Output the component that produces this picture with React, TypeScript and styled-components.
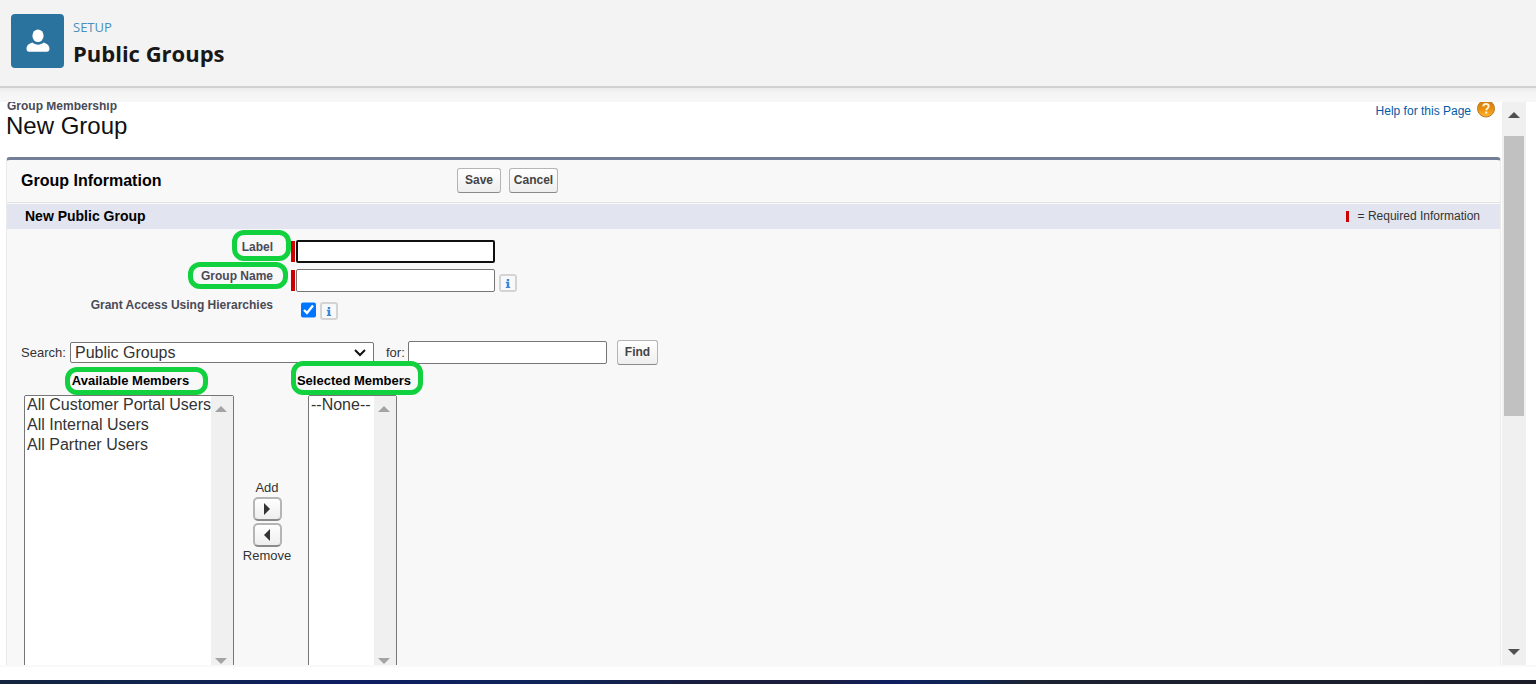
import React from "react";
import styled, { createGlobalStyle, css } from "styled-components";

const GlobalStyle = createGlobalStyle`
  *, *::before, *::after { box-sizing: border-box; }
  body {
    margin: 0;
    background: #fff;
    color: #333;
    font-family: "Liberation Sans", Arial, sans-serif;
    font-size: 13px;
    line-height: 16px;
  }
  h1, h2, h3, p { margin: 0; }
  button, input, select { font-family: inherit; margin: 0; }
`;

const Page = styled.div`
  display: flex;
  flex-direction: column;
  height: 100vh;
  overflow: hidden;
  background: #fff;
`;

const SetupHeader = styled.header`
  display: flex;
  flex: none;
  align-items: flex-start;
  gap: 9px;
  height: 88px;
  padding: 14px 11px 0;
  background: #f3f3f3;
  border-bottom: 2px solid #d0d0d0;
`;

const HeaderIcon = styled.span`
  display: flex;
  align-items: center;
  justify-content: center;
  width: 53px;
  height: 54px;
  border-radius: 4px;
  background: #2a739e;
`;

const HeaderText = styled.div`
  font-family: "Open Sans", "Noto Sans", sans-serif;
  padding-top: 4px;
`;

const Eyebrow = styled.p`
  font-size: 13px;
  line-height: 18px;
  color: #4a8fc0;
`;

const HeaderTitle = styled.h1`
  font-size: 22px;
  line-height: 34px;
  font-weight: 700;
  color: #181818;
`;

const HeaderShade = styled.div`
  flex: none;
  height: 14px;
  background: linear-gradient(#ececec, #f5f5f5 5px, #f7f7f7);
`;

const Frame = styled.div`
  display: flex;
  flex: 1;
  min-height: 0;
  padding-right: 10px;
`;

const Content = styled.main`
  flex: 1;
  min-width: 0;
  overflow: hidden;
  padding: 0 1px 0 6px;
`;

const TitleRow = styled.div`
  display: flex;
  justify-content: space-between;
  align-items: flex-start;
  height: 55px;
`;

const TitleText = styled.div`
  margin-top: -4px;
`;

const Crumb = styled.p`
  padding-left: 1px;
  font-size: 12px;
  font-weight: 700;
  color: #4a4a56;
`;

const Title = styled.h2`
  font-size: 24px;
  line-height: 24px;
  font-weight: 400;
  color: #111;
`;

const HelpLink = styled.a`
  display: flex;
  align-items: flex-start;
  gap: 6px;
  margin-top: -2px;
  padding-right: 6px;
  font-size: 12px;
  line-height: 22px;
  color: #015ba7;
  text-decoration: none;
`;

const Panel = styled.form`
  height: 540px;
  background: #f8f8f8;
  border: 1px solid #eaeaea;
  border-top: 3px solid #747e96;
  border-radius: 4px;
`;

const PanelHead = styled.div`
  display: grid;
  grid-template-columns: 436px 1fr;
  align-items: center;
  height: 43px;
  padding-left: 14px;
  padding-bottom: 1px;
  border-bottom: 1px solid #e2e2e2;
`;

const PanelTitle = styled.h2`
  font-size: 16px;
  line-height: 20px;
  color: #000;
`;

const ButtonBar = styled.div`
  display: flex;
  gap: 8px;
`;

const buttonFace = css`
  border: 1px solid;
  border-color: #b5b5b5 #b5b5b5 #8a8a8a;
  border-radius: 3px;
  background: linear-gradient(#fff, #eee);
  color: #444;
`;

const Button = styled.button<{ $width: number }>`
  ${buttonFace}
  width: ${(p) => p.$width}px;
  height: 25px;
  padding: 0 0 1px;
  font-size: 12px;
  line-height: 16px;
  font-weight: 700;
`;

const SectionBar = styled.div`
  display: flex;
  align-items: center;
  justify-content: space-between;
  height: 25px;
  margin-top: 1px;
  padding: 0 20px 1px 18px;
  background: #e2e5ef;
`;

const SectionTitle = styled.h3`
  font-size: 14px;
  line-height: 20px;
  color: #000;
`;

const RequiredNote = styled.span`
  display: flex;
  align-items: center;
  gap: 9px;
  font-size: 12px;
  &::before {
    content: "";
    width: 3px;
    height: 11px;
    background: #c00;
  }
`;

const Fields = styled.div`
  display: flex;
  flex-direction: column;
  gap: 6px;
  padding-top: 11px;
`;

const Field = styled.div`
  display: grid;
  grid-template-columns: 266px 1fr;
  column-gap: 18px;
  align-items: start;
  min-height: 23px;
`;

const FieldLabel = styled.label`
  justify-self: end;
  font-size: 12px;
  line-height: 14px;
  font-weight: 700;
  color: #4a4a56;
`;

const FieldControl = styled.div`
  display: flex;
  align-items: flex-end;
  gap: 4px;
`;

const RequiredMark = styled.span`
  align-self: center;
  width: 4px;
  height: 21px;
  background: #c00;
`;

const RequiredPair = styled.span`
  display: flex;
  gap: 1px;
`;

const TextInput = styled.input<{ $active?: boolean }>`
  width: 199px;
  height: 23px;
  padding: 0 4px;
  border: ${(p) => (p.$active ? "2px solid #101010" : "1px solid #767676")};
  border-radius: 2px;
  background: #fff;
  font-size: 16px;
  outline: none;
`;

const CheckControl = styled(FieldControl)`
  padding: 4px 0 0 10px;
`;

const Checkbox = styled.input`
  align-self: flex-start;
  width: 15px;
  height: 16px;
  accent-color: #0075ff;
`;

const InfoButton = styled.button`
  display: flex;
  align-items: center;
  justify-content: center;
  width: 18px;
  height: 18px;
  padding: 0;
  border: 2px solid #d4d4d4;
  border-radius: 3px;
  background: #f6f8fa;
`;

const SearchRow = styled.div`
  display: flex;
  align-items: center;
  height: 25px;
  padding-left: 14px;
  margin-top: 19px;
`;

const SearchLabel = styled.label`
  width: 49px;
`;

const ForLabel = styled.label`
  width: 22px;
  margin-left: 12px;
`;

const SelectWrap = styled.span`
  display: grid;
  align-items: center;
  svg {
    grid-area: 1 / 1;
    justify-self: end;
    margin-right: 8px;
    pointer-events: none;
  }
`;

const Select = styled.select`
  grid-area: 1 / 1;
  appearance: none;
  width: 304px;
  height: 21px;
  padding: 0 4px;
  border: 1px solid #767676;
  border-radius: 2px;
  background: #fff;
  color: #333;
  font-size: 16px;
  line-height: 18px;
`;

const FindSlot = styled.span`
  margin-left: 10px;
`;

const Members = styled.div`
  display: grid;
  grid-template-columns: 210px 74px 89px;
  padding: 7px 0 0 17px;
`;

const MemberHeading = styled.div`
  display: flex;
  justify-content: center;
  height: 23px;
  padding-left: 3px;
  white-space: nowrap;
  label {
    font-weight: 700;
    line-height: 18px;
    color: #000;
  }
`;

const Ring = styled.span<{ $inset: string }>`
  position: relative;
  &::after {
    content: "";
    position: absolute;
    inset: ${(p) => p.$inset};
    border: 5px solid #11d13f;
    border-radius: 12px;
    pointer-events: none;
  }
`;

const ListBox = styled.div`
  display: flex;
  height: 280px;
  border: 1px solid #767676;
  border-radius: 2px;
  background: #fff;
`;

const List = styled.select`
  flex: 1;
  min-width: 0;
  height: 100%;
  padding: 0;
  border: 0;
  background: #fff;
  color: #333;
  font-size: 16px;
  overflow: hidden;
  scrollbar-width: none;
  outline: none;
  option {
    min-height: 20px;
    padding: 0 0 0 2px;
    line-height: 18px;
  }
`;

const ListTrack = styled.div`
  display: flex;
  flex-direction: column;
  align-items: center;
  justify-content: space-between;
  width: 22px;
  padding: 10px 2px 10px 0;
  background: #f0f0f0;
`;

const Mover = styled.div`
  display: flex;
  flex-direction: column;
  align-items: center;
  padding: 85px 8px 0 0;
`;

const MoveButton = styled.button`
  ${buttonFace}
  display: flex;
  align-items: center;
  justify-content: center;
  width: 29px;
  height: 24px;
  margin: 1px 0;
  padding: 0;
  border-width: 2px;
  border-radius: 5px;
`;

const PageTrack = styled.div`
  display: flex;
  flex-direction: column;
  align-items: center;
  width: 24px;
  padding: 10px 0;
  background: #f0f0f0;
`;

const PageThumb = styled.div`
  width: 20px;
  height: 280px;
  margin: 18px 0 auto;
  background: #c1c1c1;
`;

const FooterGap = styled.div`
  flex: none;
  height: 15px;
  border-top: 2px solid #f9f9f9;
`;

const FooterBar = styled.footer`
  flex: none;
  height: 4px;
  background: linear-gradient(
    90deg,
    #14243f,
    #0f2450 12%,
    #0d1d62 22%,
    #0e2458 36%,
    #1b1d3c 47%,
    #1b1d3c 53%,
    #0e1f60 58%,
    #0f2552 63%,
    #1b2232 67%,
    #1b1c28
  );
`;

const Arrow = ({ down, color }: { down?: boolean; color: string }) => (
  <svg width="12" height="6" viewBox="0 0 12 6" aria-hidden="true">
    <path d={down ? "M0 0H12L6 6Z" : "M0 6H12L6 0Z"} fill={color} />
  </svg>
);

const InfoGlyph = () => (
  <svg width="6" height="9" viewBox="0 0 6 9" aria-hidden="true">
    <path d="M2 0h2v2H2zM1 3h3v5h1v1H1V8h1V4H1z" fill="#3d87d3" stroke="#3d87d3" strokeWidth="0.4" />
  </svg>
);

const MemberList = ({ id, options }: { id: string; options: string[] }) => (
  <ListBox>
    <List id={id} multiple size={14}>
      {options.map((o) => (
        <option key={o}>{o}</option>
      ))}
    </List>
    <ListTrack>
      <Arrow color="#a3a3a3" />
      <Arrow down color="#a3a3a3" />
    </ListTrack>
  </ListBox>
);

export default function App() {
  return (
    <>
      <GlobalStyle />
      <Page>
        <SetupHeader>
          <HeaderIcon>
            <svg width="24" height="24" viewBox="0 0 24 24" fill="#fff" aria-hidden="true">
              <ellipse cx="12" cy="6.8" rx="5.6" ry="6.3" />
              <path d="M6.400 13.600C8 15 9.900 15.700 12 15.700s4-.7 5.600-2.100c3.300 1.100 5.900 3 5.900 6.200 0 2-1 3-2.600 3H3.100C1.500 22.800.5 21.800.5 19.800c0-3.200 2.600-5.100 5.900-6.200z" />
            </svg>
          </HeaderIcon>
          <HeaderText>
            <Eyebrow>SETUP</Eyebrow>
            <HeaderTitle>Public Groups</HeaderTitle>
          </HeaderText>
        </SetupHeader>
        <HeaderShade />

        <Frame>
          <Content>
            <TitleRow>
              <TitleText>
                <Crumb>Group Membership</Crumb>
                <Title>New Group</Title>
              </TitleText>
              <HelpLink href="#help">
                Help for this Page
                <svg width="18" height="18" viewBox="0 0 18 18" aria-hidden="true">
                  <defs>
                    <linearGradient id="helpFill" x1="0" y1="0" x2="0" y2="1">
                      <stop offset="0" stopColor="#c97a12" />
                      <stop offset="0.5" stopColor="#e98d0c" />
                      <stop offset="1" stopColor="#ffb52e" />
                    </linearGradient>
                  </defs>
                  <circle cx="9" cy="8.5" r="8.5" fill="url(#helpFill)" stroke="#b87a28" strokeWidth="1" />
                  <path d="M6.300 6.400C6.400 4.900 7.500 4 9 4s2.700.9 2.700 2.300c0 1.800-2.400 2-2.400 4" fill="none" stroke="#fff3d6" strokeWidth="2" />
                  <rect x="8.200" y="11.500" width="2.100" height="2.100" fill="#fff3d6" />
                </svg>
              </HelpLink>
            </TitleRow>

            <Panel onSubmit={(e) => e.preventDefault()}>
              <PanelHead>
                <PanelTitle>Group Information</PanelTitle>
                <ButtonBar>
                  <Button type="submit" $width={44}>Save</Button>
                  <Button type="button" $width={49}>Cancel</Button>
                </ButtonBar>
              </PanelHead>
              <SectionBar>
                <SectionTitle>New Public Group</SectionTitle>
                <RequiredNote>= Required Information</RequiredNote>
              </SectionBar>

              <Fields>
                <Field>
                  <FieldLabel htmlFor="label">
                    <Ring $inset="-10px -18px -7px -10px">Label</Ring>
                  </FieldLabel>
                  <FieldControl>
                    <RequiredPair>
                      <RequiredMark />
                      <TextInput id="label" type="text" $active />
                    </RequiredPair>
                  </FieldControl>
                </Field>
                <Field>
                  <FieldLabel htmlFor="groupName">
                    <Ring $inset="-7px -15px -6px -13px">Group Name</Ring>
                  </FieldLabel>
                  <FieldControl>
                    <RequiredPair>
                      <RequiredMark />
                      <TextInput id="groupName" type="text" />
                    </RequiredPair>
                    <InfoButton type="button" aria-label="Group name help">
                      <InfoGlyph />
                    </InfoButton>
                  </FieldControl>
                </Field>
                <Field>
                  <FieldLabel htmlFor="hierarchies">Grant Access Using Hierarchies</FieldLabel>
                  <CheckControl>
                    <Checkbox id="hierarchies" type="checkbox" defaultChecked />
                    <InfoButton type="button" aria-label="Hierarchies help">
                      <InfoGlyph />
                    </InfoButton>
                  </CheckControl>
                </Field>
              </Fields>

              <SearchRow>
                <SearchLabel htmlFor="scope">Search:</SearchLabel>
                <SelectWrap>
                  <Select id="scope" defaultValue="Public Groups">
                    <option>Public Groups</option>
                  </Select>
                  <svg width="12" height="8" viewBox="0 0 12 8" aria-hidden="true">
                    <path d="M1 1l5 5 5-5" fill="none" stroke="#111" strokeWidth="2" />
                  </svg>
                </SelectWrap>
                <ForLabel htmlFor="term">for:</ForLabel>
                <TextInput id="term" type="text" />
                <FindSlot>
                  <Button type="button" $width={41}>Find</Button>
                </FindSlot>
              </SearchRow>

              <Members>
                <MemberHeading>
                  <label htmlFor="available">
                    <Ring $inset="-6px -19px -7px -7px">Available Members</Ring>
                  </label>
                </MemberHeading>
                <span />
                <MemberHeading>
                  <label htmlFor="selected">
                    <Ring $inset="-12px -12px -7px -6px">Selected Members</Ring>
                  </label>
                </MemberHeading>
                <MemberList
                  id="available"
                  options={["All Customer Portal Users", "All Internal Users", "All Partner Users"]}
                />
                <Mover>
                  <span>Add</span>
                  <MoveButton type="button" aria-label="Add">
                    <svg width="8" height="12" viewBox="0 0 8 12" aria-hidden="true">
                      <path d="M1 0L7 6 1 12z" fill="#333" />
                    </svg>
                  </MoveButton>
                  <MoveButton type="button" aria-label="Remove">
                    <svg width="8" height="12" viewBox="0 0 8 12" aria-hidden="true">
                      <path d="M7 0L1 6 7 12z" fill="#333" />
                    </svg>
                  </MoveButton>
                  <span>Remove</span>
                </Mover>
                <MemberList id="selected" options={["--None--"]} />
              </Members>
            </Panel>
          </Content>
          <PageTrack>
            <Arrow color="#505050" />
            <PageThumb />
            <Arrow down color="#505050" />
          </PageTrack>
        </Frame>
        <FooterGap />
        <FooterBar />
      </Page>
    </>
  );
}
